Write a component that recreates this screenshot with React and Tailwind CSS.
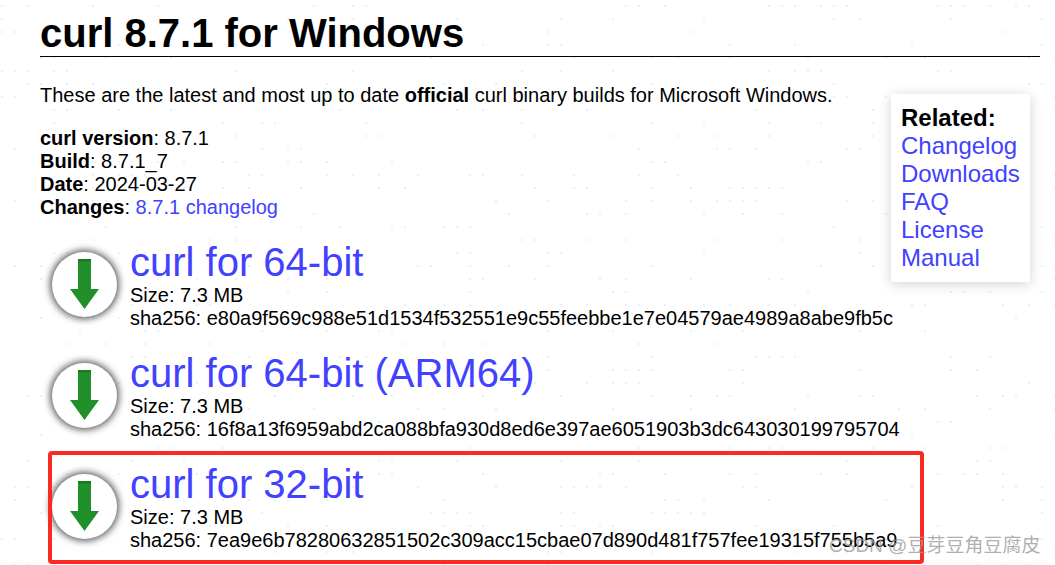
import React from 'react';

const builds = [
  { name: 'curl for 64-bit', sha: 'e80a9f569c988e51d1534f532551e9c55feebbe1e7e04579ae4989a8abe9fb5c' },
  { name: 'curl for 64-bit (ARM64)', sha: '16f8a13f6959abd2ca088bfa930d8ed6e397ae6051903b3dc643030199795704' },
  { name: 'curl for 32-bit', sha: '7ea9e6b78280632851502c309acc15cbae07d890d481f757fee19315f755b5a9' },
];

const related = ['Changelog', 'Downloads', 'FAQ', 'License', 'Manual'];

// faint scattered dots behind the page
const dots = [];
for (let x = 0; x < 82; x++) {
  for (let y = 0; y < 44; y++) {
    const h = Math.sin(x * 12.9898 + y * 78.233) * 43758.5453;
    if (h - Math.floor(h) < 0.2) dots.push([x * 13 + 1, y * 13 + 5]);
  }
}

const DownloadIcon = () => (
  <div className="w-[65px] h-[65px] shrink-0 rounded-full bg-white flex items-center justify-center shadow-[0_0_7px_2px_rgba(0,0,0,0.65)]">
    <svg width="29" height="50" viewBox="0 0 29 50">
      <path d="M8 0H21V30H29L14.5 50L0 30H8Z" fill="#22902a" />
      <path d="M8 0H21V2.5H8Z" fill="#1a7a22" />
    </svg>
  </div>
);

const App = () => {
  return (
    <div className="relative w-[1055px] h-[565px] overflow-hidden bg-white text-black font-['Liberation_Sans',Arial,sans-serif]">
      <svg className="absolute inset-0" width="1055" height="565">
        {dots.map(([x, y]) => (
          <rect key={`${x}-${y}`} x={x} y={y} width="2" height="2" fill="#e6f1fb" />
        ))}
      </svg>

      <div className="relative pl-10 pr-[15px] pt-[11px]">
        <h1 className="text-[40px] leading-[44px] font-bold border-b border-black pb-[1px]">curl 8.7.1 for Windows</h1>

        <div className="float-right w-[139px] mt-[37px] mr-[10px] px-[10px] py-[10px] bg-white shadow-[0_2px_12px_rgba(0,0,0,0.18)]">
          <div className="text-[24px] leading-[28px] font-bold">Related:</div>
          {related.map((item) => (
            <div key={item} className="text-[24px] leading-[28px] text-[#4141ff]">{item}</div>
          ))}
        </div>

        <p className="text-[20px] leading-[23px] mt-[27px]">
          These are the latest and most up to date <b>official</b> curl binary builds for Microsoft Windows.
        </p>

        <div className="text-[20px] leading-[23px] mt-[20px]">
          <div><b>curl version</b>: 8.7.1</div>
          <div><b>Build</b>: 8.7.1_7</div>
          <div><b>Date</b>: 2024-03-27</div>
          <div><b>Changes</b>: <span className="text-[#4141ff]">8.7.1 changelog</span></div>
        </div>

        <div className="mt-[11px] flex flex-col gap-[3px]">
          {builds.map((build) => (
            <div key={build.name} className="flex items-center h-[108px] pl-[12px] gap-[13px]">
              <DownloadIcon />
              <div>
                <div className="text-[40px] leading-[45px] text-[#4141ff] pt-[1px]">{build.name}</div>
                <div className="text-[20px] leading-[23px] -mt-[1px]">Size: 7.3 MB</div>
                <div className="text-[20px] leading-[23px] whitespace-nowrap">sha256: {build.sha}</div>
              </div>
            </div>
          ))}
        </div>
      </div>

      <div className="absolute left-[48px] top-[451px] w-[876px] h-[113px] border-[4px] border-[#fb2a22] rounded-[4px]" />
      <div className="absolute left-[829px] top-[535px] text-[19px] leading-[22px] text-[#9a9a9a]/80 font-['Liberation_Sans','Noto_Sans_CJK_SC',sans-serif] whitespace-nowrap">CSDN @豆芽豆角豆腐皮</div>
    </div>
  );
};

export default App;
